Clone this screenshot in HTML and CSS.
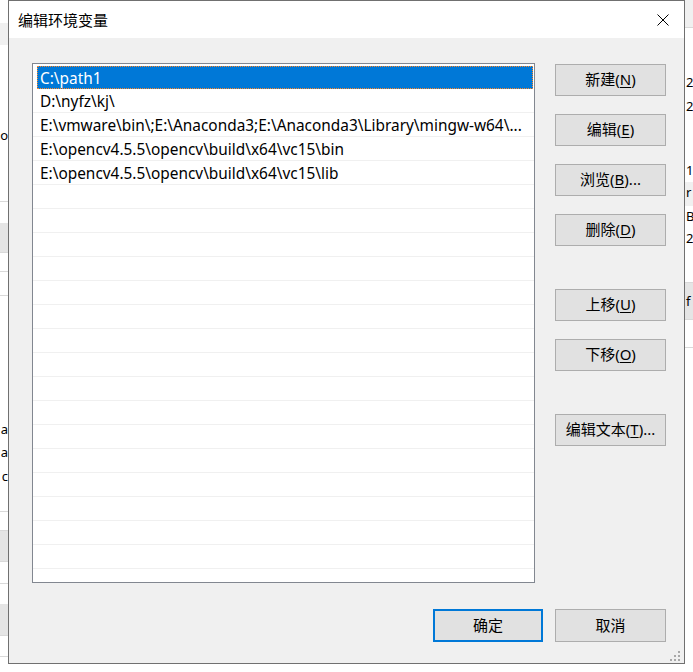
FILE: index.html
```html
<!DOCTYPE html>
<html lang="zh-CN">
<head>
    <meta charset="UTF-8">
    <meta name="viewport" content="width=device-width, initial-scale=1.0">
    <title>编辑环境变量</title>
    <link rel="stylesheet" href="styles.css">
</head>
<body>
    <!-- the window behind the dialog, only its edges show -->
    <div class="backdrop">
        <div class="edge edge-left">
            <div class="blk h23"></div>
            <div class="blk h22 shade"></div>
            <div class="blk h80"></div>
            <div class="blk h16 txt">o</div>
            <div class="blk h60"></div>
            <div class="blk h22 line-top"></div>
            <div class="blk h30 shade-dark line-bottom"></div>
            <div class="blk h18"></div>
            <div class="blk h24 line-top"></div>
            <div class="blk h20 line-top"></div>
            <div class="blk h104"></div>
            <div class="blk h23 txt">a</div>
            <div class="blk h24 txt">a</div>
            <div class="blk h45 txt">c</div>
            <div class="blk h19 line-top"></div>
            <div class="blk h32 shade-dark line-top line-bottom"></div>
            <div class="blk h21"></div>
            <div class="blk h21 line-top"></div>
            <div class="blk h32 shade-dark line-bottom"></div>
            <div class="blk h20"></div>
            <div class="blk h8 line-top"></div>
        </div>
        <div class="edge edge-right">
            <div class="blk h28 shade line-bottom"></div>
            <div class="blk h44"></div>
            <div class="blk h24 txt-r">2</div>
            <div class="blk h24 txt-r">2</div>
            <div class="blk h40"></div>
            <div class="blk h22 txt-r">1</div>
            <div class="blk h24 shade txt-r">r</div>
            <div class="blk h22 txt-r">B</div>
            <div class="blk h32 txt-r">2</div>
            <div class="blk h22"></div>
            <div class="blk h38 shade-dark line-top line-bottom txt-r">f</div>
            <div class="blk h28 line-bottom"></div>
        </div>
    </div>

    <div class="dialog">
        <div class="titlebar">
            <span class="title">编辑环境变量</span>
            <svg class="close" width="12" height="12" viewBox="0 0 12 12">
                <path d="M0.5 0.5 L11.5 11.5 M11.5 0.5 L0.5 11.5" stroke="#000" stroke-width="1" fill="none"/>
            </svg>
        </div>

        <div class="content">
            <div class="main">
                <div class="listbox">
                    <div class="item selected"><span class="sel">C:\path1</span></div>
                    <div class="item">D:\nyfz\kj\</div>
                    <div class="item">E:\vmware\bin\;E:\Anaconda3;E:\Anaconda3\Library\mingw-w64\...</div>
                    <div class="item">E:\opencv4.5.5\opencv\build\x64\vc15\bin</div>
                    <div class="item">E:\opencv4.5.5\opencv\build\x64\vc15\lib</div>
                    <div class="item"></div>
                    <div class="item"></div>
                    <div class="item"></div>
                    <div class="item"></div>
                    <div class="item"></div>
                    <div class="item"></div>
                    <div class="item"></div>
                    <div class="item"></div>
                    <div class="item"></div>
                    <div class="item"></div>
                    <div class="item"></div>
                    <div class="item"></div>
                    <div class="item"></div>
                    <div class="item"></div>
                    <div class="item"></div>
                    <div class="item"></div>
                </div>

                <div class="side">
                    <button class="btn">新建(<u>N</u>)</button>
                    <button class="btn">编辑(<u>E</u>)</button>
                    <button class="btn">浏览(<u>B</u>)...</button>
                    <button class="btn">删除(<u>D</u>)</button>
                    <button class="btn spaced">上移(<u>U</u>)</button>
                    <button class="btn">下移(<u>O</u>)</button>
                    <button class="btn spaced">编辑文本(<u>T</u>)...</button>
                </div>
            </div>

            <div class="footer">
                <button class="btn default">确定</button>
                <button class="btn">取消</button>
            </div>
        </div>

        <svg class="grip" width="11" height="11" viewBox="0 0 11 11">
            <g fill="#a8a8a8">
                <rect x="8" y="0" width="2" height="2"/>
                <rect x="4" y="4" width="2" height="2"/>
                <rect x="8" y="4" width="2" height="2"/>
                <rect x="0" y="8" width="2" height="2"/>
                <rect x="4" y="8" width="2" height="2"/>
                <rect x="8" y="8" width="2" height="2"/>
            </g>
        </svg>
    </div>
</body>
</html>
```

FILE: styles.css
```css
html, body {
    margin: 0;
    padding: 0;
}
body {
    width: 693px;
    height: 672px;
    overflow: hidden;
    position: relative;
    background: #fff;
    font-family: "Noto Sans", "Noto Sans CJK SC", sans-serif;
    font-size: 15px;
    color: #000;
}

/* backdrop window edges */
.backdrop {
    display: flex;
    justify-content: space-between;
    height: 672px;
}
.edge {
    width: 8px;
}
.blk {
    box-sizing: border-box;
    white-space: nowrap;
    line-height: 20px;
    font-size: 13px;
}
.txt {
    text-align: right;
}
.txt-r {
    text-align: left;
    padding-left: 1px;
}
.shade { background: #f0f0f0; }
.shade-dark { background: #e5e5e5; }
.line-top { border-top: 1px solid #d9d9d9; }
.line-bottom { border-bottom: 1px solid #d9d9d9; }
.h8 { height: 8px; }
.h16 { height: 16px; }
.h18 { height: 18px; }
.h19 { height: 19px; }
.h20 { height: 20px; }
.h21 { height: 21px; }
.h22 { height: 22px; }
.h23 { height: 23px; }
.h24 { height: 24px; }
.h28 { height: 28px; }
.h30 { height: 30px; }
.h32 { height: 32px; }
.h38 { height: 38px; line-height: 36px; }
.h40 { height: 40px; }
.h44 { height: 44px; }
.h45 { height: 45px; }
.h60 { height: 60px; }
.h80 { height: 80px; }
.h104 { height: 104px; }

/* dialog window */
.dialog {
    position: absolute;
    left: 8px;
    top: 0;
    width: 677px;
    height: 664px;
    box-sizing: border-box;
    border: 1px solid #707070;
    background: #f0f0f0;
    display: flex;
    flex-direction: column;
}
.titlebar {
    height: 37px;
    background: #fff;
    display: flex;
    align-items: center;
    justify-content: space-between;
    padding: 0 15px 0 9px;
}
.title {
    font-family: "Noto Sans CJK SC", sans-serif;
    font-size: 15px;
}
.close {
    display: block;
}

.content {
    padding: 25px 18px 0 23px;
}
.main {
    display: flex;
    gap: 20px;
}
.listbox {
    width: 504px;
    height: 520px;
    box-sizing: border-box;
    border: 1px solid #828790;
    background: #fff;
    padding-top: 1px;
    overflow: hidden;
    font-size: 15.4px;
}
.item {
    height: 24px;
    box-sizing: border-box;
    border-bottom: 1px solid #f0f0f0;
    padding: 1px 0 0 7px;
    line-height: 23px;
    white-space: nowrap;
}
.item.selected {
    padding: 1px 1px 0 4px;
    border-bottom: none;
}
.sel {
    display: block;
    height: 23px;
    box-sizing: border-box;
    background: #0078d7;
    color: #fff;
    border: 1px dotted #ff8728;
    padding-left: 2px;
    line-height: 23px;
}

.side {
    display: flex;
    flex-direction: column;
    gap: 18px;
    padding-top: 1px;
}
.btn {
    width: 111px;
    height: 32px;
    box-sizing: border-box;
    border: 1px solid #adadad;
    background: #e1e1e1;
    font-family: "Noto Sans", "Noto Sans CJK SC", sans-serif;
    font-size: 15px;
    color: #000;
    padding: 0 0 3px;
}
.btn u {
    text-underline-offset: 2px;
}
.btn.spaced {
    margin-top: 25px;
}
.footer {
    display: flex;
    justify-content: flex-end;
    gap: 12px;
    margin-top: 26px;
}
.btn.default {
    border: 2px solid #0078d7;
    width: 110px;
}
.footer .btn {
    height: 33px;
}

.grip {
    position: absolute;
    right: 3px;
    bottom: 1px;
}
```
